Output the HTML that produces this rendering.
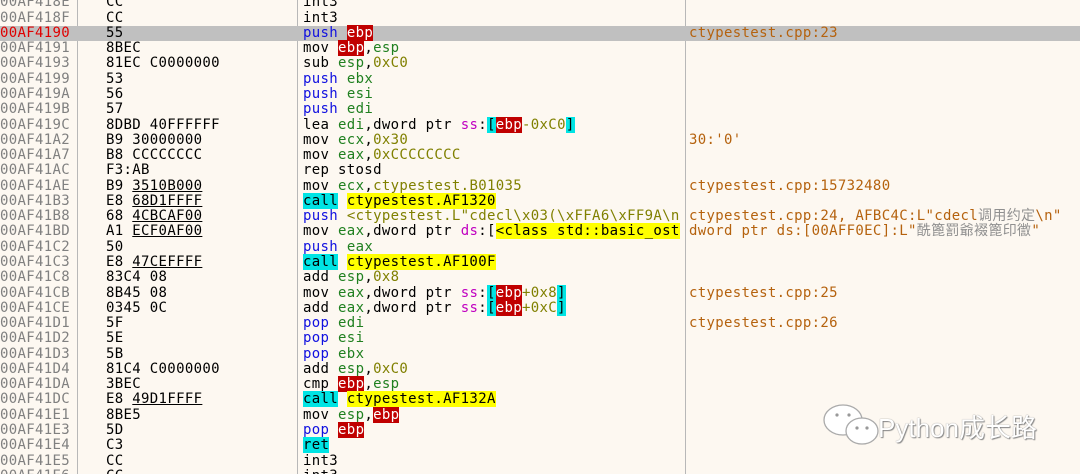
<!DOCTYPE html><html><head><meta charset="utf-8"><style>
html{overflow:hidden}
body{margin:0;width:1080px;height:474px;overflow:hidden;background:#fdf8f1;font-family:"DejaVu Sans Mono","Noto Sans CJK SC",monospace;font-size:14px;letter-spacing:0.33px;color:#000;position:relative}
.row{position:absolute;left:0;width:1080px;height:15.27px;line-height:15.27px;white-space:pre}
.row span.a{position:absolute;left:0;color:#808080}
.row span.h{position:absolute;left:106px}
.row span.i{position:absolute;left:303px}
.row span.k{position:absolute;left:689px;color:#b5620e}
.sel{background:#c0c0c0}
.sep{position:absolute;top:0;height:474px;width:1px;background:#b8b8b8}
.r{background:#c00000;color:#fff}.c{background:#00e4e4}.y{background:#ffff00}
.b{color:#1010e0}.g{color:#208020}.o{color:#808000}.m{color:#c000c0}.gr{color:#909090}
</style></head><body>
<div class="sep" style="left:77px"></div><div class="sep" style="left:297px"></div><div class="sep" style="left:685px"></div>
<div class="row" style="top:-4.6px"><span class="a">00AF418E</span><span class="h">CC</span><span class="i">int3</span></div>
<div class="row" style="top:10.67px"><span class="a">00AF418F</span><span class="h">CC</span><span class="i">int3</span></div>
<div class="row sel" style="top:25.94px"><span class="a" style="color:#e00000">00AF4190</span><span class="h">55</span><span class="i"><span class="b">push</span> <span class="r">ebp</span></span><span class="k">ctypestest.cpp:23</span></div>
<div class="row" style="top:41.21px"><span class="a">00AF4191</span><span class="h">8BEC</span><span class="i">mov <span class="r">ebp</span>,<span class="g">esp</span></span></div>
<div class="row" style="top:56.48px"><span class="a">00AF4193</span><span class="h">81EC C0000000</span><span class="i">sub <span class="g">esp</span>,<span class="o">0xC0</span></span></div>
<div class="row" style="top:71.75px"><span class="a">00AF4199</span><span class="h">53</span><span class="i"><span class="b">push</span> <span class="g">ebx</span></span></div>
<div class="row" style="top:87.02px"><span class="a">00AF419A</span><span class="h">56</span><span class="i"><span class="b">push</span> <span class="g">esi</span></span></div>
<div class="row" style="top:102.29px"><span class="a">00AF419B</span><span class="h">57</span><span class="i"><span class="b">push</span> <span class="g">edi</span></span></div>
<div class="row" style="top:117.56px"><span class="a">00AF419C</span><span class="h">8DBD 40FFFFFF</span><span class="i">lea <span class="g">edi</span>,dword ptr <span class="m">ss</span>:<span class="c">[</span><span class="r">ebp</span><span class="o">-0xC0</span><span class="c">]</span></span></div>
<div class="row" style="top:132.83px"><span class="a">00AF41A2</span><span class="h">B9 30000000</span><span class="i">mov <span class="g">ecx</span>,<span class="o">0x30</span></span><span class="k">30:'0'</span></div>
<div class="row" style="top:148.1px"><span class="a">00AF41A7</span><span class="h">B8 CCCCCCCC</span><span class="i">mov <span class="g">eax</span>,<span class="o">0xCCCCCCCC</span></span></div>
<div class="row" style="top:163.37px"><span class="a">00AF41AC</span><span class="h">F3:AB</span><span class="i">rep stosd</span></div>
<div class="row" style="top:178.64px"><span class="a">00AF41AE</span><span class="h">B9 <u>3510B000</u></span><span class="i">mov <span class="g">ecx</span>,<span class="o">ctypestest.B01035</span></span><span class="k">ctypestest.cpp:15732480</span></div>
<div class="row" style="top:193.91px"><span class="a">00AF41B3</span><span class="h">E8 <u>68D1FFFF</u></span><span class="i"><span class="c">call</span> <span class="y">ctypestest.AF1320</span></span></div>
<div class="row" style="top:209.18px"><span class="a">00AF41B8</span><span class="h">68 <u>4CBCAF00</u></span><span class="i"><span class="b">push</span> <span class="o">&lt;ctypestest.L"cdecl\x03(\xFFA6\xFF9A\n</span></span><span class="k">ctypestest.cpp:24, AFBC4C:L"cdecl<span class="gr">调用约定</span>\n"</span></div>
<div class="row" style="top:224.45px"><span class="a">00AF41BD</span><span class="h">A1 <u>ECF0AF00</u></span><span class="i">mov <span class="g">eax</span>,dword ptr <span class="m">ds</span>:[<span class="y">&lt;class std::basic_ost</span></span><span class="k">dword ptr ds:[00AFF0EC]:L"<span class="gr">酰篦罰爺裰篦印徾</span>"</span></div>
<div class="row" style="top:239.72px"><span class="a">00AF41C2</span><span class="h">50</span><span class="i"><span class="b">push</span> <span class="g">eax</span></span></div>
<div class="row" style="top:254.99px"><span class="a">00AF41C3</span><span class="h">E8 <u>47CEFFFF</u></span><span class="i"><span class="c">call</span> <span class="y">ctypestest.AF100F</span></span></div>
<div class="row" style="top:270.26px"><span class="a">00AF41C8</span><span class="h">83C4 08</span><span class="i">add <span class="g">esp</span>,<span class="o">0x8</span></span></div>
<div class="row" style="top:285.53px"><span class="a">00AF41CB</span><span class="h">8B45 08</span><span class="i">mov <span class="g">eax</span>,dword ptr <span class="m">ss</span>:<span class="c">[</span><span class="r">ebp</span><span class="o">+0x8</span><span class="c">]</span></span><span class="k">ctypestest.cpp:25</span></div>
<div class="row" style="top:300.8px"><span class="a">00AF41CE</span><span class="h">0345 0C</span><span class="i">add <span class="g">eax</span>,dword ptr <span class="m">ss</span>:<span class="c">[</span><span class="r">ebp</span><span class="o">+0xC</span><span class="c">]</span></span></div>
<div class="row" style="top:316.07px"><span class="a">00AF41D1</span><span class="h">5F</span><span class="i"><span class="b">pop</span> <span class="g">edi</span></span><span class="k">ctypestest.cpp:26</span></div>
<div class="row" style="top:331.34px"><span class="a">00AF41D2</span><span class="h">5E</span><span class="i"><span class="b">pop</span> <span class="g">esi</span></span></div>
<div class="row" style="top:346.61px"><span class="a">00AF41D3</span><span class="h">5B</span><span class="i"><span class="b">pop</span> <span class="g">ebx</span></span></div>
<div class="row" style="top:361.88px"><span class="a">00AF41D4</span><span class="h">81C4 C0000000</span><span class="i">add <span class="g">esp</span>,<span class="o">0xC0</span></span></div>
<div class="row" style="top:377.15px"><span class="a">00AF41DA</span><span class="h">3BEC</span><span class="i">cmp <span class="r">ebp</span>,<span class="g">esp</span></span></div>
<div class="row" style="top:392.42px"><span class="a">00AF41DC</span><span class="h">E8 <u>49D1FFFF</u></span><span class="i"><span class="c">call</span> <span class="y">ctypestest.AF132A</span></span></div>
<div class="row" style="top:407.69px"><span class="a">00AF41E1</span><span class="h">8BE5</span><span class="i">mov <span class="g">esp</span>,<span class="r">ebp</span></span></div>
<div class="row" style="top:422.96px"><span class="a">00AF41E3</span><span class="h">5D</span><span class="i"><span class="b">pop</span> <span class="r">ebp</span></span></div>
<div class="row" style="top:438.23px"><span class="a">00AF41E4</span><span class="h">C3</span><span class="i"><span class="c">ret</span></span></div>
<div class="row" style="top:453.5px"><span class="a">00AF41E5</span><span class="h">CC</span><span class="i">int3</span></div>
<div class="row" style="top:468.77px"><span class="a">00AF41E6</span><span class="h">CC</span><span class="i">int3</span></div>
<svg style="position:absolute;left:822px;top:400px" width="72" height="46" viewBox="0 0 72 46">
<ellipse cx="21" cy="20" rx="19" ry="15" fill="#fff" stroke="#aaa" stroke-width="1.3"/>
<ellipse cx="40" cy="31" rx="16" ry="13" fill="#fff" stroke="#aaa" stroke-width="1.3"/>
<circle cx="15" cy="15" r="1.6" fill="#999"/><circle cx="27" cy="15" r="1.6" fill="#999"/>
<circle cx="35" cy="28" r="1.6" fill="#999"/><circle cx="45" cy="28" r="1.6" fill="#999"/>
</svg>
<div style="position:absolute;left:878px;top:408px;font-family:'Liberation Sans','Noto Sans CJK SC',sans-serif;font-size:26px;letter-spacing:0;color:#fff;text-shadow:0 0 1px #777,1px 1px 1px #888">Python成长路</div>
</body></html>
